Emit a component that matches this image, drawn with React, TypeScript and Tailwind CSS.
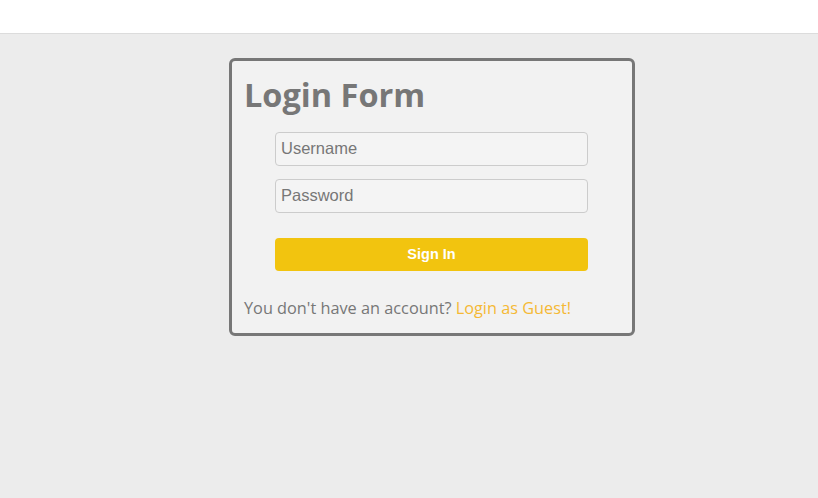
const LoginPage = () => {
  return (
    <div className="min-h-screen bg-[#ececec] font-['Open_Sans',sans-serif]">
      {/* Header */}
      <header className="h-[34px] bg-white border-b border-[#dcdcdc]" />

      {/* Login card */}
      <div className="ml-[229px] mt-[24px] w-[406px] rounded-[6px] border-[3px] border-[#777777] bg-[#f2f2f2] px-3 pt-[12px] pb-[14px]">
        <h1 className="text-[32.5px] leading-[44px] font-bold text-[#777777]">Login Form</h1>

        <form className="mt-[15px] ml-[31px] w-[313px] flex flex-col" onSubmit={(e) => e.preventDefault()}>
          <input
            type="text"
            placeholder="Username"
            className="h-[34px] rounded-[4px] border border-[#cccccc] bg-[#f4f4f4] px-[5px] pb-[2px] text-[16.5px] text-[#555] placeholder:text-[#777777] font-['Liberation_Sans',Arial,sans-serif] outline-none"
          />
          <input
            type="password"
            placeholder="Password"
            className="mt-[13px] h-[34px] rounded-[4px] border border-[#cccccc] bg-[#f4f4f4] px-[5px] pb-[2px] text-[16.5px] text-[#555] placeholder:text-[#777777] font-['Liberation_Sans',Arial,sans-serif] outline-none"
          />
          <button
            type="submit"
            className="mt-[25px] h-[33px] rounded-[4px] bg-[#f2c40f] text-white text-[14.5px] font-extrabold font-['Liberation_Sans',Arial,sans-serif]"
          >
            Sign In
          </button>
        </form>

        <p className="mt-[26px] text-[16.3px] leading-[22px] text-[#777777]">
          You don't have an account? <a href="#" className="text-[#f5b935]">Login as Guest!</a>
        </p>
      </div>
    </div>
  );
};

export default function App() {
  return <LoginPage />;
}
